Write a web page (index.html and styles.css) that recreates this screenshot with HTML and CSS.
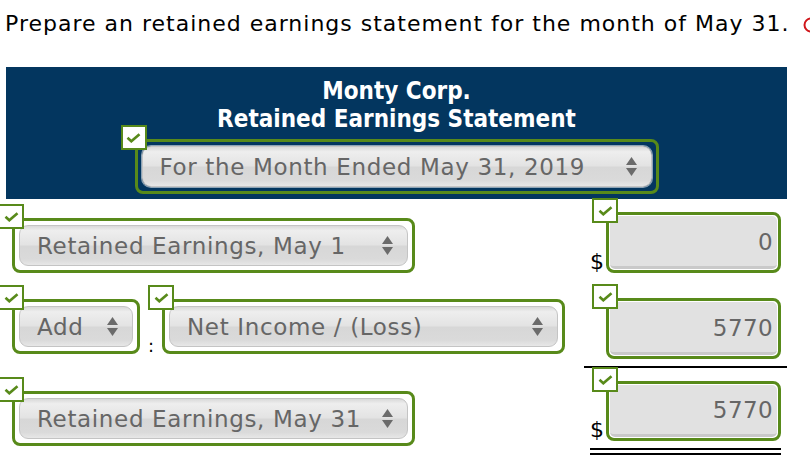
FILE: index.html
```html
<!DOCTYPE html>
<html>
<head>
<meta charset="utf-8">
<title>Retained Earnings Statement</title>
<link rel="stylesheet" href="styles.css">
</head>
<body>
<p class="prompt">Prepare an retained earnings statement for the month of May 31. <svg class="flag" width="16" height="16" viewBox="0 0 16 16"><circle cx="8" cy="8" r="6.5" fill="none" stroke="#d0161b" stroke-width="2"/></svg></p>

<div class="statement">
  <div class="header">
    <div class="title">Monty Corp.</div>
    <div class="title">Retained Earnings Statement</div>
    <div class="field field-date">
      <span class="check"><svg width="15" height="10" viewBox="0 0 15 10"><path d="M1.5 4.8 L5.3 8.3 L13.5 1.2" fill="none" stroke="#588a1a" stroke-width="2.6"/></svg></span>
      <div class="select"><span>For the Month Ended May 31, 2019</span><svg class="arrows" width="11" height="19" viewBox="0 0 11 19"><path d="M5.5 0L11 8H0z M0 11H11L5.5 19z" fill="#6b6b6b"/></svg></div>
    </div>
  </div>

  <div class="row row-1">
    <div class="label-cell">
      <div class="field wide">
        <span class="check"><svg width="15" height="10" viewBox="0 0 15 10"><path d="M1.5 4.8 L5.3 8.3 L13.5 1.2" fill="none" stroke="#588a1a" stroke-width="2.6"/></svg></span>
        <div class="select"><span>Retained Earnings, May 1</span><svg class="arrows" width="11" height="19" viewBox="0 0 11 19"><path d="M5.5 0L11 8H0z M0 11H11L5.5 19z" fill="#6b6b6b"/></svg></div>
      </div>
    </div>
    <div class="amount-cell">
      <div class="amount">
        <span class="dollar">$</span>
        <div class="field field-num">
          <span class="check"><svg width="15" height="10" viewBox="0 0 15 10"><path d="M1.5 4.8 L5.3 8.3 L13.5 1.2" fill="none" stroke="#588a1a" stroke-width="2.6"/></svg></span>
          <div class="input">0</div>
        </div>
      </div>
    </div>
  </div>

  <div class="row row-2">
    <div class="label-cell">
      <div class="pair">
        <div class="field short">
          <span class="check"><svg width="15" height="10" viewBox="0 0 15 10"><path d="M1.5 4.8 L5.3 8.3 L13.5 1.2" fill="none" stroke="#588a1a" stroke-width="2.6"/></svg></span>
          <div class="select"><span>Add</span><svg class="arrows" width="11" height="19" viewBox="0 0 11 19"><path d="M5.5 0L11 8H0z M0 11H11L5.5 19z" fill="#6b6b6b"/></svg></div>
        </div>
        <span class="colon">:</span>
        <div class="field wide">
          <span class="check"><svg width="15" height="10" viewBox="0 0 15 10"><path d="M1.5 4.8 L5.3 8.3 L13.5 1.2" fill="none" stroke="#588a1a" stroke-width="2.6"/></svg></span>
          <div class="select"><span>Net Income / (Loss)</span><svg class="arrows" width="11" height="19" viewBox="0 0 11 19"><path d="M5.5 0L11 8H0z M0 11H11L5.5 19z" fill="#6b6b6b"/></svg></div>
        </div>
      </div>
    </div>
    <div class="amount-cell">
      <div class="amount">
        <span class="dollar"></span>
        <div class="field field-num">
          <span class="check"><svg width="15" height="10" viewBox="0 0 15 10"><path d="M1.5 4.8 L5.3 8.3 L13.5 1.2" fill="none" stroke="#588a1a" stroke-width="2.6"/></svg></span>
          <div class="input">5770</div>
        </div>
      </div>
    </div>
  </div>

  <div class="row row-3">
    <div class="label-cell">
      <div class="field wide">
        <span class="check"><svg width="15" height="10" viewBox="0 0 15 10"><path d="M1.5 4.8 L5.3 8.3 L13.5 1.2" fill="none" stroke="#588a1a" stroke-width="2.6"/></svg></span>
        <div class="select"><span>Retained Earnings, May 31</span><svg class="arrows" width="11" height="19" viewBox="0 0 11 19"><path d="M5.5 0L11 8H0z M0 11H11L5.5 19z" fill="#6b6b6b"/></svg></div>
      </div>
    </div>
    <div class="amount-cell">
      <div class="amount">
        <span class="dollar">$</span>
        <div class="field field-num field-total">
          <span class="check"><svg width="15" height="10" viewBox="0 0 15 10"><path d="M1.5 4.8 L5.3 8.3 L13.5 1.2" fill="none" stroke="#588a1a" stroke-width="2.6"/></svg></span>
          <div class="input">5770</div>
        </div>
      </div>
      <div class="double-rule"></div>
    </div>
  </div>
</div>
</body>
</html>
```
FILE: styles.css
```css
html, body {
  margin: 0;
  padding: 0;
  overflow: hidden;
}

body {
  width: 810px;
  height: 472px;
  background: #fff;
  color: #000;
  font-family: "DejaVu Sans", Verdana, sans-serif;
}

.prompt {
  margin: 0;
  height: 67px;
  box-sizing: border-box;
  padding: 9px 0 0 5px;
  font-size: 22px;
  line-height: 30px;
  letter-spacing: 1px;
  white-space: nowrap;
}

.flag {
  vertical-align: -2px;
  margin-left: 6px;
}

.header {
  margin-left: 6px;
  width: 781px;
  height: 132px;
  box-sizing: border-box;
  padding-top: 10px;
  background: #03365f;
  color: #fff;
  text-align: center;
}

.title {
  font-family: "DejaVu Sans Condensed", "DejaVu Sans", sans-serif;
  font-weight: bold;
  font-size: 24px;
  line-height: 28px;
}

.field {
  position: relative;
  box-sizing: border-box;
  border: 3px solid #588a1a;
  border-radius: 8px;
  padding: 4px;
}

.check {
  position: absolute;
  left: -17px;
  top: -17px;
  width: 26px;
  height: 25px;
  box-sizing: border-box;
  border: 2px solid #588a1a;
  background: #fff;
  display: flex;
  align-items: center;
  justify-content: center;
}

.select {
  height: 100%;
  box-sizing: border-box;
  display: flex;
  align-items: center;
  justify-content: space-between;
  padding: 0 14px 0 17px;
  border: 1px solid #c4c4c4;
  border-radius: 9px;
  background: linear-gradient(to bottom, #d9d9d9 0%, #eeeeee 12%, #e3e3e3 48%, #d7d7d7 52%, #dadada 85%, #e7e7e7 100%);
  box-shadow: 0 0 0 1px rgba(255, 255, 255, 0.55);
  color: #666;
  font-size: 23px;
  letter-spacing: 0.65px;
  text-align: left;
  white-space: nowrap;
}

.arrows {
  flex: none;
}

.field-date {
  width: 524px;
  height: 55px;
  margin: 6px auto 0;
}

.row {
  display: flex;
}

.row-1 { height: 85px; }
.row-2 { height: 84px; }
.row-3 { height: 104px; }

.label-cell {
  width: 584px;
  box-sizing: border-box;
  padding-left: 12px;
  display: flex;
  align-items: flex-start;
}

.row-1 .label-cell { padding-top: 19px; }
.row-2 .label-cell { padding-top: 15px; }
.row-3 .label-cell { padding-top: 23px; }

.wide {
  width: 403px;
  height: 55px;
  background: #fff;
}

.short {
  width: 128px;
  height: 55px;
  background: #fff;
}

.pair {
  display: flex;
  align-items: flex-end;
}

.colon {
  width: 22px;
  text-align: center;
  font-size: 18px;
  line-height: 18px;
  margin-bottom: -1px;
}

.amount-cell {
  width: 203px;
  box-sizing: border-box;
}

.row-1 .amount-cell { padding-top: 13px; }
.row-2 .amount-cell { padding-top: 14px; height: 84px; border-bottom: 2px solid #000; }
.row-3 .amount-cell { padding-top: 13px; }

.amount {
  display: flex;
  align-items: flex-end;
}

.dollar {
  width: 22px;
  box-sizing: border-box;
  padding-right: 2px;
  text-align: right;
  font-size: 22px;
  line-height: 22px;
}

.field-num {
  width: 175px;
  height: 61px;
  padding: 1px;
  background: #fff;
}

.field-total {
  height: 60px;
}

.input {
  height: 100%;
  box-sizing: border-box;
  display: flex;
  align-items: center;
  justify-content: flex-end;
  padding: 1px 4px 0 0;
  background: #e1e1e1;
  border-radius: 5px;
  border-bottom: 3px solid #c9c9c9;
  color: #666;
  font-size: 23px;
  letter-spacing: 0.4px;
}

.double-rule {
  margin: 7px 0 0 6px;
  width: 191px;
  height: 3px;
  border-top: 2px solid #000;
  border-bottom: 2px solid #000;
}
```
